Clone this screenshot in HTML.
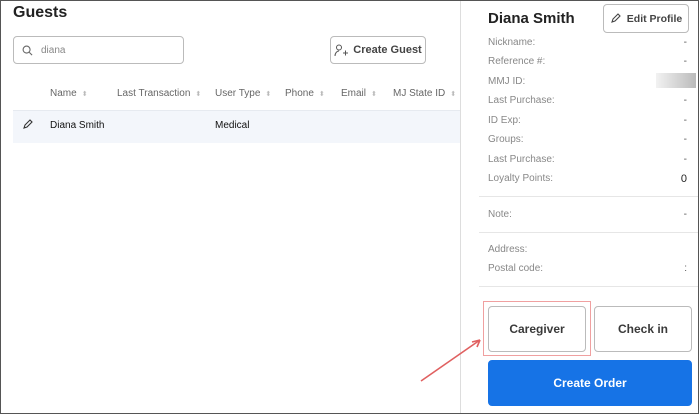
<!DOCTYPE html>
<html><head><style>
*{margin:0;padding:0;box-sizing:border-box}
body{width:699px;height:414px;overflow:hidden;background:#fff;font-family:"Liberation Sans",sans-serif;position:relative;color:#222}
.frame{position:absolute;left:0;top:0;width:699px;height:414px;border:1px solid #555;pointer-events:none}
.a{position:absolute;white-space:nowrap}
.h{font-size:11px;color:#666}
.lbl{font-size:10px;color:#888;left:488px}
.val{font-size:10px;color:#555;right:12px}
.btn{position:absolute;border:1px solid #bbb;border-radius:4px;background:#fff;display:flex;align-items:center;justify-content:center;font-size:12px;color:#333}
.s{color:#bbb;font-size:7px;margin-left:5px}
</style></head><body>
<div class="a" style="left:13px;top:4px;font-size:16px;font-weight:bold;color:#222">Guests</div>
<div class="btn" style="left:13px;top:36px;width:171px;height:28px;justify-content:flex-start;padding-left:8px;color:#888;font-size:10px">
<svg width="11" height="11" viewBox="0 0 12 12" style="margin-right:8px"><circle cx="5" cy="5" r="3.8" fill="none" stroke="#666" stroke-width="1.2"/><path d="M8 8l3 3" stroke="#666" stroke-width="1.2"/></svg>diana</div>
<div class="btn" style="left:330px;top:36px;width:96px;height:28px;font-size:11px;font-weight:bold;color:#444">
<svg width="14" height="13" viewBox="0 0 14 13" style="margin-right:5px"><circle cx="5" cy="3.5" r="2.5" fill="none" stroke="#555" stroke-width="1"/><path d="M1 12c0-3 2-5 4-5" fill="none" stroke="#555"/><path d="M9 9h5M11.5 6.5v5" stroke="#555"/></svg>Create Guest</div>
<div class="a h" style="left:50px;top:88px;font-size:10px">Name<span class="s">⬍</span></div>
<div class="a h" style="left:117px;top:88px;font-size:10px">Last Transaction<span class="s">⬍</span></div>
<div class="a h" style="left:215px;top:88px;font-size:10px">User Type<span class="s">⬍</span></div>
<div class="a h" style="left:285px;top:88px;font-size:10px">Phone<span class="s">⬍</span></div>
<div class="a h" style="left:341px;top:88px;font-size:10px">Email<span class="s">⬍</span></div>
<div class="a h" style="left:393px;top:88px;font-size:10px">MJ State ID<span class="s">⬍</span></div>
<div class="a" style="left:13px;top:110px;width:447px;height:33px;background:#f3f6fb;border-top:1px solid #e6eaf0"></div>
<svg class="a" style="left:22px;top:119px" width="11" height="11" viewBox="0 0 11 11"><path d="M2 9l1-3 5-5 2 2-5 5z" fill="none" stroke="#333" stroke-width="1.1"/></svg>
<div class="a" style="left:50px;top:120px;font-size:10px;color:#111">Diana Smith</div>
<div class="a" style="left:215px;top:120px;font-size:10px;color:#111">Medical</div>
<div class="a" style="left:460px;top:0;width:1px;height:414px;background:#ddd"></div>
<div class="a" style="left:488px;top:10px;font-size:15px;font-weight:bold;color:#222">Diana Smith</div>
<div class="btn" style="left:603px;top:4px;width:86px;height:29px;font-size:10.5px;font-weight:bold;color:#444">
<svg width="11" height="11" viewBox="0 0 11 11" style="margin-right:6px"><path d="M2 9l1-3 5-5 2 2-5 5z" fill="none" stroke="#444" stroke-width="1.1"/></svg>Edit Profile</div>
<div class="a lbl" style="top:37px">Nickname:</div><div class="a val" style="top:37px">-</div>
<div class="a lbl" style="top:56px">Reference #:</div><div class="a val" style="top:56px">-</div>
<div class="a lbl" style="top:76px">MMJ ID:</div><div class="a" style="left:656px;top:73px;width:40px;height:15px;background:linear-gradient(90deg,#f2f2f2,#bbb)"></div>
<div class="a lbl" style="top:95px">Last Purchase:</div><div class="a val" style="top:95px">-</div>
<div class="a lbl" style="top:115px">ID Exp:</div><div class="a val" style="top:115px">-</div>
<div class="a lbl" style="top:134px">Groups:</div><div class="a val" style="top:134px">-</div>
<div class="a lbl" style="top:154px">Last Purchase:</div><div class="a val" style="top:154px">-</div>
<div class="a lbl" style="top:173px">Loyalty Points:</div><div class="a val" style="top:173px;color:#222;font-size:11px">0</div>
<div class="a" style="left:479px;top:196px;width:220px;height:1px;background:#e6e6e6"></div>
<div class="a lbl" style="top:209px">Note:</div><div class="a val" style="top:209px">-</div>
<div class="a" style="left:479px;top:232px;width:220px;height:1px;background:#e6e6e6"></div>
<div class="a lbl" style="top:244px">Address:</div>
<div class="a lbl" style="top:263px">Postal code:</div><div class="a val" style="top:263px">:</div>
<div class="a" style="left:479px;top:286px;width:220px;height:1px;background:#e6e6e6"></div>
<div class="a" style="left:483px;top:301px;width:108px;height:55px;border:1px solid #f0a0a0"></div>
<div class="btn" style="left:488px;top:306px;width:98px;height:46px;font-weight:bold;color:#3a3a3a">Caregiver</div>
<div class="btn" style="left:594px;top:306px;width:98px;height:46px;font-weight:bold;color:#3a3a3a">Check in</div>
<div class="btn" style="left:488px;top:360px;width:204px;height:46px;background:#1673e6;border-color:#1673e6;color:#fff;font-weight:bold">Create Order</div>
<svg class="a" style="left:418px;top:336px" width="70" height="50"><path d="M3 45L62 4" stroke="#e06060" stroke-width="1.6"/><path d="M62 4l-8 2M62 4l-3 7" stroke="#e06060" stroke-width="1.6"/></svg>
<div class="frame"></div>
</body></html>
